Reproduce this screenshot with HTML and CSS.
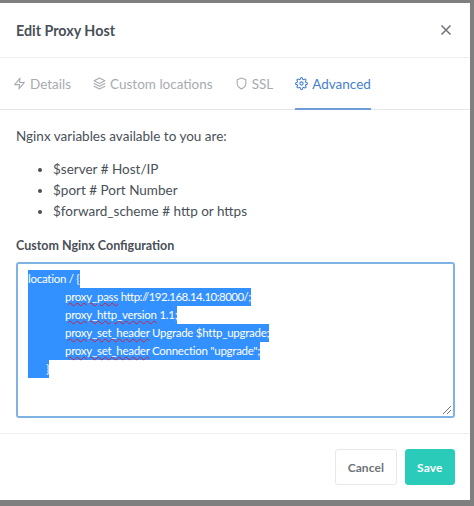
FILE: index.html
```html
<!DOCTYPE html>
<html lang="en">
<head>
  <meta charset="UTF-8" />
  <meta name="viewport" content="width=device-width, initial-scale=1.0"/>
  <title>Edit Proxy Host</title>
  <link rel="stylesheet" href="styles.css">
</head>
<body>
  <div class="modal">
    <div class="modal-header">
      <h1>Edit Proxy Host</h1>
      <svg class="close" viewBox="0 0 12 12"><path d="M1.5 1.5l9 9M10.5 1.5l-9 9"/></svg>
    </div>

    <div class="tabs">
      <a class="tab">
        <svg class="icon" viewBox="0 0 24 24"><polygon points="13 2 3 14 12 14 11 22 21 10 12 10 13 2"/></svg>
        Details
      </a>
      <a class="tab">
        <svg class="icon" viewBox="0 0 24 24"><polygon points="12 2 2 7 12 12 22 7 12 2"/><polyline points="2 17 12 22 22 17"/><polyline points="2 12 12 17 22 12"/></svg>
        Custom locations
      </a>
      <a class="tab">
        <svg class="icon" viewBox="0 0 24 24"><path d="M12 22s8-4 8-10V5l-8-3-8 3v7c0 6 8 10 8 10z"/></svg>
        SSL
      </a>
      <a class="tab active">
        <svg class="icon" viewBox="0 0 24 24"><circle cx="12" cy="12" r="3"/><path d="M19.4 15a1.65 1.65 0 0 0 .33 1.82l.06.06a2 2 0 0 1 0 2.83 2 2 0 0 1-2.83 0l-.06-.06a1.65 1.65 0 0 0-1.82-.33 1.65 1.65 0 0 0-1 1.51V21a2 2 0 0 1-2 2 2 2 0 0 1-2-2v-.09A1.65 1.65 0 0 0 9 19.4a1.65 1.65 0 0 0-1.82.33l-.06.06a2 2 0 0 1-2.83 0 2 2 0 0 1 0-2.83l.06-.06a1.65 1.65 0 0 0 .33-1.82 1.65 1.65 0 0 0-1.51-1H3a2 2 0 0 1-2-2 2 2 0 0 1 2-2h.09A1.65 1.65 0 0 0 4.6 9a1.65 1.65 0 0 0-.33-1.82l-.06-.06a2 2 0 0 1 0-2.83 2 2 0 0 1 2.83 0l.06.06a1.65 1.65 0 0 0 1.82.33H9a1.65 1.65 0 0 0 1-1.51V3a2 2 0 0 1 2-2 2 2 0 0 1 2 2v.09a1.65 1.65 0 0 0 1 1.51 1.65 1.65 0 0 0 1.82-.33l.06-.06a2 2 0 0 1 2.83 0 2 2 0 0 1 0 2.83l-.06.06a1.65 1.65 0 0 0-.33 1.82V9a1.65 1.65 0 0 0 1.51 1H21a2 2 0 0 1 2 2 2 2 0 0 1-2 2h-.09a1.65 1.65 0 0 0-1.51 1z"/></svg>
        Advanced
      </a>
    </div>

    <div class="modal-body">
      <p class="intro">Nginx variables available to you are:</p>
      <ul class="vars">
        <li>$server # Host/IP</li>
        <li>$port # Port Number</li>
        <li>$forward_scheme # http or https</li>
      </ul>
      <label class="field-label">Custom Nginx Configuration</label>
      <div class="config">
        <div class="line">location / {</div>
        <div class="line indent"><span class="typo">proxy_pass</span> <span class="url">http://192.168.14.10:8000/;</span></div>
        <div class="line indent"><span class="typo">proxy_http_version</span> 1.1;</div>
        <div class="line indent"><span class="typo">proxy_set_header</span> Upgrade $http_upgrade;</div>
        <div class="line indent"><span class="typo">proxy_set_header</span> Connection "upgrade";</div>
        <div class="line brace">}</div>
        <svg class="grip" viewBox="0 0 10 10"><path d="M9 1L1 9M9 5L5 9"/></svg>
      </div>
    </div>

    <div class="modal-footer">
      <button class="btn">Cancel</button>
      <button class="btn btn-save">Save</button>
    </div>
  </div>
</body>
</html>
```

FILE: styles.css
```css
* {
  box-sizing: border-box;
}

body {
  margin: 0;
  height: 506px;
  overflow: hidden;
  background: #7f7f7f;
  font-family: Lato, "Noto Sans", Arial, sans-serif;
  color: #495057;
}

.modal {
  width: 470px;
  height: 497px;
  margin-top: 3px;
  background: #fff;
  display: flex;
  flex-direction: column;
}

.modal-header {
  height: 55px;
  flex: none;
  padding: 0 16px;
  display: flex;
  align-items: center;
  justify-content: space-between;
  border-bottom: 1px solid #eceef0;
}

h1 {
  margin: 0;
  font-size: 14.3px;
  font-weight: 700;
}

.close {
  width: 12px;
  height: 12px;
  margin-right: 2px;
  fill: none;
  stroke: #6e7479;
  stroke-width: 1.5;
}

.tabs {
  height: 52px;
  flex: none;
  padding-left: 13px;
  display: flex;
  gap: 22px;
  border-bottom: 1px solid #e3e6e9;
}

.tab {
  display: flex;
  align-items: center;
  gap: 4px;
  font-size: 13.5px;
  color: #a7abb0;
  margin-bottom: -1px;
  border-bottom: 2px solid transparent;
  padding-top: 1px;
}

.tab.active {
  color: #467fcf;
  border-bottom-color: #6f9bd6;
}

.icon {
  width: 13px;
  height: 13px;
  fill: none;
  stroke: currentColor;
  stroke-width: 2;
  stroke-linecap: round;
  stroke-linejoin: round;
}

.modal-body {
  flex: 1;
  padding: 16px 15px 0 16px;
  border-bottom: 1px solid #eceef0;
}

.intro {
  margin: 0 0 13px;
  font-size: 13.5px;
  line-height: 20px;
}

.vars {
  margin: 0 0 14px;
  padding-left: 37px;
  font-size: 13.5px;
  line-height: 21px;
}

.field-label {
  display: block;
  margin-bottom: 6px;
  font-size: 12.5px;
  font-weight: 700;
  line-height: 20px;
}

.config {
  position: relative;
  height: 156px;
  padding: 6px 10px;
  border: 2px solid #7fb2e5;
  border-radius: 3px;
  font-size: 11.5px;
  line-height: 18px;
  letter-spacing: -0.27px;
}

.line {
  width: fit-content;
  background: #3390ff;
  color: #fff;
  white-space: pre;
}

.indent {
  padding-left: 37px;
}

.brace {
  padding-left: 18px;
}

.typo {
  text-decoration: underline wavy #c9233f 1px;
  text-underline-offset: 1px;
}

.url {
  letter-spacing: -0.53px;
}

.grip {
  position: absolute;
  right: 1px;
  bottom: 1px;
  width: 10px;
  height: 10px;
  fill: none;
  stroke: #777;
  stroke-width: 1;
}

.modal-footer {
  height: 66px;
  flex: none;
  padding: 15px 15px 0 0;
  display: flex;
  justify-content: flex-end;
  gap: 8px;
}

.btn {
  height: 36px;
  padding: 0 11.5px;
  border: 1px solid #e6e8ea;
  border-radius: 3px;
  background: #fff;
  color: #6e7479;
  font-family: inherit;
  font-size: 12px;
  font-weight: 700;
  letter-spacing: 0.1px;
}

.btn-save {
  border-color: #2bcbba;
  background: #2bcbba;
  color: #fff;
}
```
